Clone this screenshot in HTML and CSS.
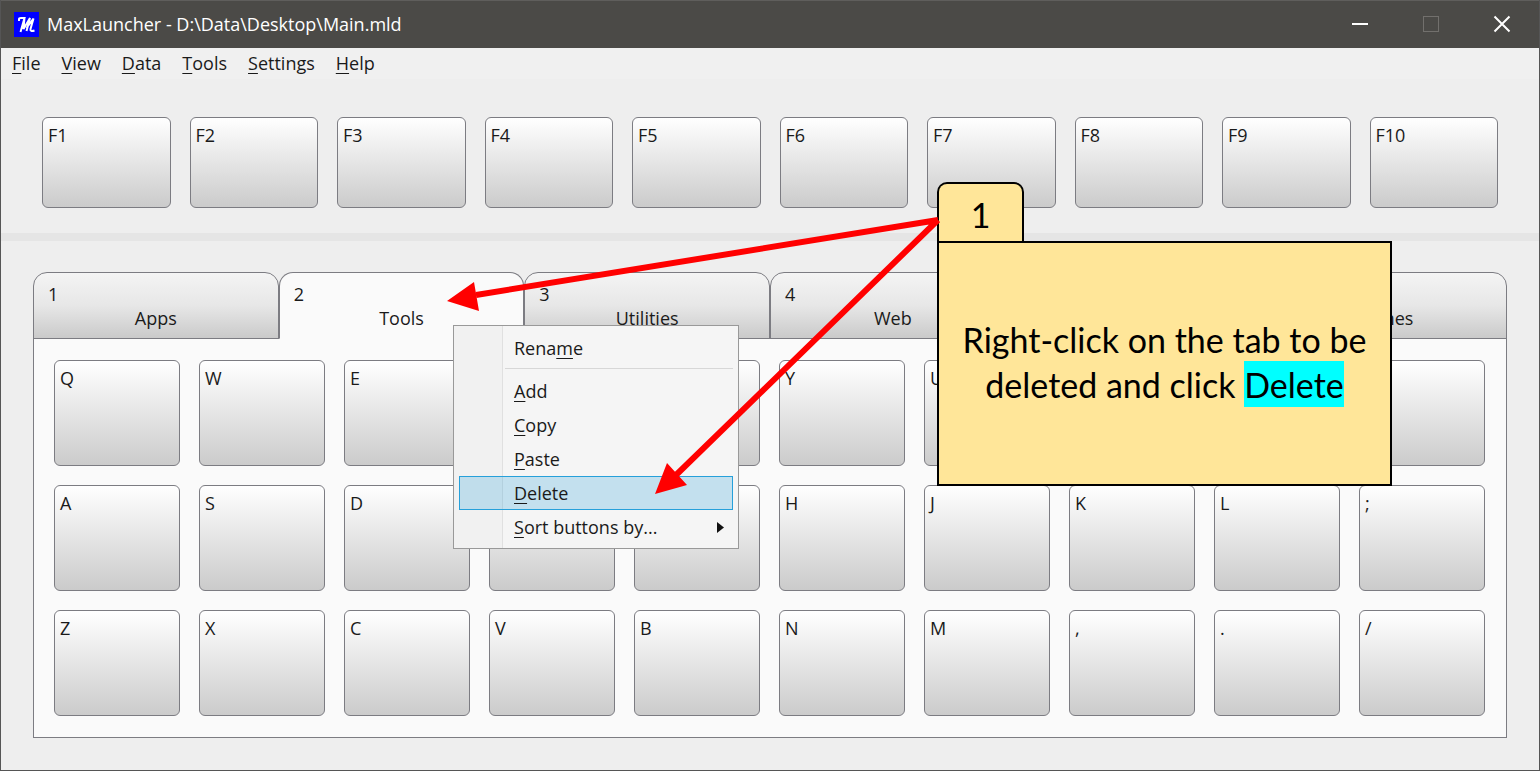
FILE: index.html
```html
<!DOCTYPE html>
<html lang="en">
<head>
<meta charset="utf-8">
<title>MaxLauncher</title>
<link rel="stylesheet" href="styles.css">
</head>
<body>
<div class="window">
  <header class="titlebar">
    <svg class="logo" viewBox="0 0 25 25" aria-hidden="true"><rect width="25" height="25" fill="#0000ff"/><path d="M5 9V7Q5 6 7 6H10.500L6.500 20M10.500 6L9.500 17L16 6L12.500 19M12.500 16L19.500 6.500L16.500 17Q16 20 20.500 18.500" fill="none" stroke="#fff" stroke-width="2"/></svg>
    <h1 class="title">MaxLauncher - D:\Data\Desktop\Main.mld</h1>
    <div class="controls">
      <button class="control" aria-label="Minimize"><svg viewBox="0 0 18 18"><path d="M1 9H17" stroke="#fff" stroke-width="2"/></svg></button>
      <button class="control" aria-label="Maximize" disabled><svg viewBox="0 0 18 18"><rect x="1.500" y="1.500" width="15" height="15" fill="none" stroke="#72706d"/></svg></button>
      <button class="control" aria-label="Close"><svg viewBox="0 0 18 18"><path d="M1.500 1.500L16.500 16.500M16.500 1.500L1.500 16.500" stroke="#fff" stroke-width="2"/></svg></button>
    </div>
  </header>
  <nav class="menubar">
    <button><u>F</u>ile</button><button><u>V</u>iew</button><button><u>D</u>ata</button><button><u>T</u>ools</button><button><u>S</u>ettings</button><button><u>H</u>elp</button>
  </nav>
  <main class="content">
    <section class="functions" aria-label="Function keys">
      <button class="key">F1</button><button class="key">F2</button><button class="key">F3</button><button class="key">F4</button><button class="key">F5</button><button class="key">F6</button><button class="key">F7</button><button class="key">F8</button><button class="key">F9</button><button class="key">F10</button>
    </section>
    <div class="splitter"></div>
    <section class="pages">
      <div class="tabs" role="tablist">
        <button class="tab" role="tab"><span class="number">1</span><span>Apps</span></button>
        <button class="tab active" role="tab" aria-selected="true"><span class="number">2</span><span>Tools</span></button>
        <button class="tab" role="tab"><span class="number">3</span><span>Utilities</span></button>
        <button class="tab" role="tab"><span class="number">4</span><span>Web</span></button>
        <button class="tab" role="tab"><span class="number">5</span></button>
        <button class="tab" role="tab"><span class="number">6</span><span>Games</span></button>
      </div>
      <div class="board" role="tabpanel">
        <button class="key">Q</button><button class="key">W</button><button class="key">E</button><button class="key">R</button><button class="key">T</button><button class="key">Y</button><button class="key">U</button><button class="key" aria-label="I"></button><button class="key" aria-label="O"></button><button class="key" aria-label="P"></button>
        <button class="key">A</button><button class="key">S</button><button class="key">D</button><button class="key">F</button><button class="key">G</button><button class="key">H</button><button class="key">J</button><button class="key">K</button><button class="key">L</button><button class="key">;</button>
        <button class="key">Z</button><button class="key">X</button><button class="key">C</button><button class="key">V</button><button class="key">B</button><button class="key">N</button><button class="key">M</button><button class="key">,</button><button class="key">.</button><button class="key">/</button>
      </div>
    </section>
  </main>
  <div class="popup" role="menu">
    <button class="item" role="menuitem">Rena<u>m</u>e</button>
    <hr>
    <button class="item" role="menuitem"><u>A</u>dd</button>
    <button class="item" role="menuitem"><u>C</u>opy</button>
    <button class="item" role="menuitem"><u>P</u>aste</button>
    <button class="item selected" role="menuitem"><u>D</u>elete</button>
    <button class="item" role="menuitem"><span><u>S</u>ort buttons by...</span><svg class="more" viewBox="0 0 7 11" aria-hidden="true"><path d="M0 0L7 5.500L0 11Z" fill="#111"/></svg></button>
  </div>
  <aside class="callout">
    <div class="step">1</div>
    <p class="note">Right-click on the tab to be deleted and click <mark>Delete</mark></p>
  </aside>
  <svg class="arrows" viewBox="0 0 500 300" aria-hidden="true">
    <path d="M498 20L36 95M498 20L235 276" fill="none" stroke="#f00" stroke-width="6"/>
    <path d="M7 101L34 82L39 111ZM215 294L227 263L247 285Z" fill="#f00"/>
  </svg>
</div>
</body>
</html>
```
FILE: styles.css
```css
* { box-sizing: border-box; }
body { margin: 0; font-family: "Open Sans", "Noto Sans", sans-serif; font-size: 18px; line-height: 24px; color: #1a1a1a; }
button { font: inherit; color: inherit; margin: 0; padding: 0; border: 0; background: none; text-align: left; }
u { text-underline-offset: 3px; text-decoration-thickness: 1px; }
.window { position: relative; display: flex; flex-direction: column; min-height: 100vh; border: 1px solid #555; border-top: 0; background: #eee; }
.titlebar { display: flex; align-items: center; height: 48px; padding: 0 2px 1px 13px; background: #4b4a47; border-top: 1px solid #5f5e5c; color: #fff; }
.logo { width: 25px; height: 25px; }
.title { flex: 1; margin: 0 0 0 8px; font-size: 18px; font-weight: 400; }
.controls { display: flex; }
.control { display: grid; place-items: center; width: 71px; height: 46px; }
.control svg { width: 18px; height: 18px; }
.menubar { display: flex; gap: 21px; padding: 3px 11px 4px; background: #f0f0f0; }
.content { flex: 1; display: flex; flex-direction: column; }
.functions { display: grid; grid-template-columns: repeat(10, 1fr); gap: 19px; padding: 38px 41px 25px; }
.functions .key { height: 91px; }
.key { display: flex; padding: 5px; border: 1px solid #7c7c82; border-radius: 6px; background: linear-gradient(#fff, #f2f2f2 25%, #cbcbcb); }
.splitter { height: 8px; background: #e5e5e5; }
.pages { flex: 1; display: flex; flex-direction: column; padding: 31px 32px 32px; }
.tabs { display: grid; grid-template-columns: repeat(6, 1fr); height: 67px; }
.tab { display: flex; flex-direction: column; align-items: center; justify-content: flex-start; padding-top: 9px; border: 1px solid #7c7c82; border-radius: 14px 14px 0 0; background: linear-gradient(#f4f4f4, #e7e7e7 50%, #cacaca); }
.tab .number { align-self: stretch; padding-left: 14px; }
.tab.active { z-index: 1; background: #fafafa; border-bottom-color: #fafafa; }
.board { flex: 1; display: grid; grid-template-columns: repeat(10, 1fr); grid-template-rows: repeat(3, 1fr); gap: 19px; margin-top: -1px; padding: 21px 21px 21px 20px; border: 1px solid #7c7c82; background: #fafafa; }
.popup { position: absolute; left: 452px; top: 325px; z-index: 2; width: 286px; display: flex; flex-direction: column; padding: 5px 5px 4px; border: 1px solid #999; background: linear-gradient(90deg, #f1f1f1 48px, #e0e0e0 48px, #e0e0e0 49px, #f5f5f5 49px); }
.popup hr { width: 228px; height: 1px; margin: 3px 0 5px auto; border: 0; background: #d7d7d7; }
.item { display: flex; align-items: center; justify-content: space-between; height: 34px; padding: 0 8px 0 54px; border: 1px solid transparent; white-space: pre; }
.item:not(:last-child) { justify-content: flex-start; }
.selected { border-color: #26a0da; background: rgba(38, 160, 218, 0.24); }
.more { width: 7px; height: 11px; }
.callout { position: absolute; left: 936px; top: 182px; z-index: 3; width: 455px; color: #000; font-family: Lato, "Open Sans", sans-serif; font-size: 34px; line-height: 45px; }
.step { width: 87px; height: 59px; padding-top: 8px; border: 2px solid #000; border-bottom: 0; border-radius: 10px 10px 0 0; background: #ffe699; text-align: center; }
.note { margin: 0; padding: 74px 16px 77px; border: 2px solid #000; background: #ffe699; text-align: center; }
mark { padding: 3px 0 2px; background: #0ff; color: inherit; }
.arrows { position: absolute; left: 439px; top: 200px; z-index: 4; width: 500px; height: 300px; }
```
